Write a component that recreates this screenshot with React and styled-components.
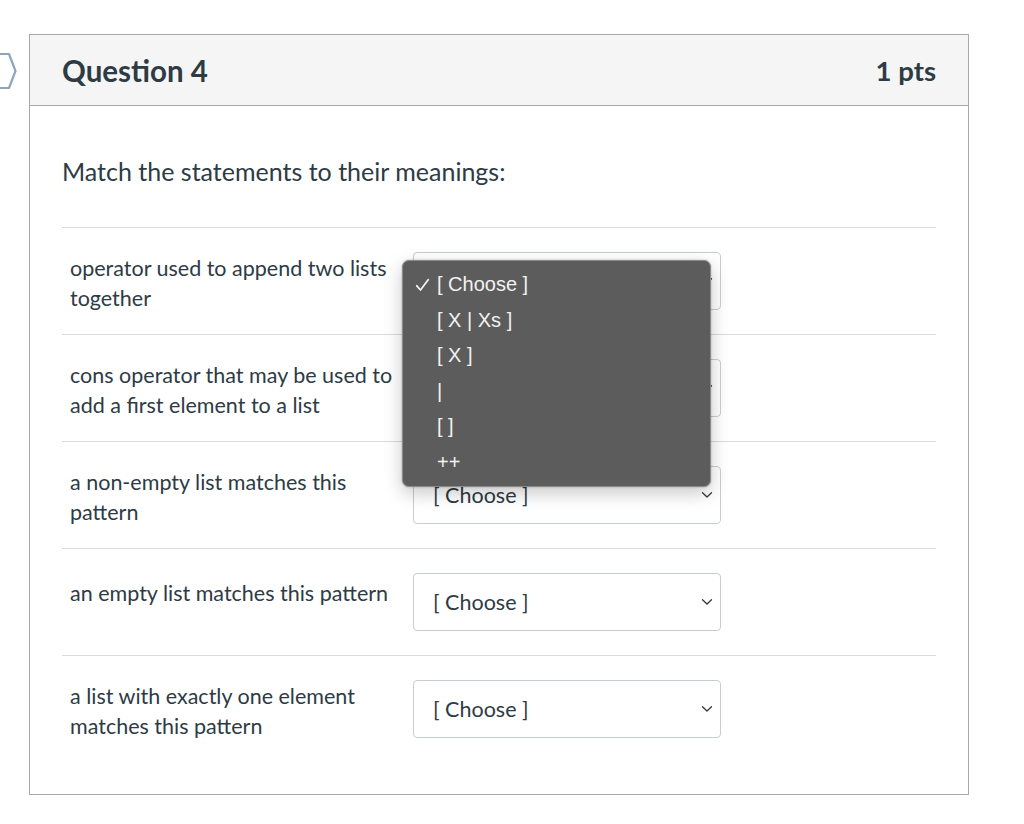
import React from "react";
import styled, { createGlobalStyle } from "styled-components";

const Global = createGlobalStyle`
  html, body { margin: 0; padding: 0; background: #ffffff; }
  body { font-family: Lato, "Open Sans", sans-serif; color: #2d3b45; }
  * { box-sizing: border-box; }
`;

const Page = styled.div`
  display: flex;
  align-items: flex-start;
  padding-top: 34px;
  width: 1024px;
  height: 824px;
  overflow: hidden;
`;

const MarkerCol = styled.div`
  width: 29px;
  flex: none;
  padding-top: 17px;
  display: flex;
`;

const Card = styled.section`
  width: 940px;
  border: 1px solid #a8a8a8;
  background: #fff;
`;

const Header = styled.header`
  height: 71px;
  background: #f5f5f5;
  border-bottom: 1px solid #a8a8a8;
  display: flex;
  align-items: center;
  justify-content: space-between;
  padding: 0 32px;
`;

const Title = styled.h2`
  margin: 0;
  font-size: 29.5px;
  font-weight: 700;
  color: #2d3b45;
`;

const Points = styled.div`
  font-size: 27.5px;
  font-weight: 700;
  color: #2d3b45;
`;

const Body = styled.div`
  padding: 50px 32px 32px;
`;

const Prompt = styled.p`
  margin: 0 0 40px;
  font-size: 25px;
  line-height: 31px;
`;

const Rows = styled.div`
  display: flex;
  flex-direction: column;
`;

const Row = styled.div`
  display: grid;
  grid-template-columns: 351px 308px;
  grid-template-rows: 58px;
  align-items: start;
  border-top: 1px solid #d9dcde;
  padding: 24px 0;
`;

const Label = styled.div`
  padding: ${(p) => (p.$single ? "5px" : "1px")} 16px 0 8px;
  font-size: 21.5px;
  line-height: 30px;
`;

const SelectWrap = styled.div`
  position: relative;
`;

const SelectBox = styled.div`
  height: 58px;
  border: 1px solid #c7cdd1;
  border-radius: 4px;
  background: #fff;
  display: flex;
  align-items: center;
  justify-content: space-between;
  padding: 0 7px 0 19px;
  font-size: 21.5px;
  color: #2d3b45;
`;

const Popup = styled.ul`
  position: absolute;
  left: -11px;
  top: 8px;
  width: 309px;
  margin: 0;
  padding: 6px 0;
  list-style: none;
  background: #5c5c5c;
  border: 1px solid #8c8c8c;
  border-radius: 7px;
  box-shadow: 0 6px 18px rgba(0, 0, 0, 0.22), 0 0 2px rgba(0, 0, 0, 0.3);
  z-index: 2;
`;

const Option = styled.li`
  height: 35.5px;
  display: flex;
  align-items: center;
  font-family: "Liberation Sans", Arial, sans-serif;
  font-size: 20px;
  color: #f2f2f2;
  padding-left: 34px;
  position: relative;
`;

const Check = styled.span`
  position: absolute;
  left: 12px;
  top: 50%;
  transform: translateY(-50%);
  display: flex;
`;

const CheckIcon = () => (
  <svg width="15" height="14" viewBox="0 0 15 14" aria-hidden="true">
    <path d="M1.8 7.8 L5.5 12 L13.2 1.8" fill="none" stroke="#f2f2f2" strokeWidth="1.8" strokeLinecap="round" strokeLinejoin="round" />
  </svg>
);

const Chevron = () => (
  <svg width="12" height="8" viewBox="0 0 12 8" aria-hidden="true">
    <path d="M1.5 1.8 L6 6 L10.5 1.8" fill="none" stroke="#2d3b45" strokeWidth="1.3" strokeLinecap="round" strokeLinejoin="round" />
  </svg>
);

const Marker = () => (
  <svg width="18" height="40" viewBox="0 0 18 40" aria-hidden="true">
    <path d="M-10 3 L9 3 L15.5 20 L9 37 L-10 37" fill="none" stroke="#8ea6bd" strokeWidth="2.2" strokeLinejoin="round" />
  </svg>
);

const rows = [
  { text: "operator used to append two lists together", single: false },
  { text: "cons operator that may be used to add a first element to a list", single: false },
  { text: "a non-empty list matches this pattern", single: false },
  { text: "an empty list matches this pattern", single: true },
  { text: "a list with exactly one element matches this pattern", single: false },
];

const options = ["[ Choose ]", "[ X | Xs ]", "[ X ]", "|", "[ ]", "++"];

export default function App() {
  return (
    <>
      <Global />
      <Page>
        <MarkerCol>
          <Marker />
        </MarkerCol>
        <Card>
          <Header>
            <Title>Question 4</Title>
            <Points>1 pts</Points>
          </Header>
          <Body>
            <Prompt>Match the statements to their meanings:</Prompt>
            <Rows>
              {rows.map((r, i) => (
                <Row key={i}>
                  <Label $single={r.single}>{r.text}</Label>
                  <SelectWrap>
                    <SelectBox>
                      <span>[ Choose ]</span>
                      <Chevron />
                    </SelectBox>
                    {i === 0 && (
                      <Popup>
                        {options.map((o, j) => (
                          <Option key={j}>
                            {j === 0 && (
                              <Check>
                                <CheckIcon />
                              </Check>
                            )}
                            {o}
                          </Option>
                        ))}
                      </Popup>
                    )}
                  </SelectWrap>
                </Row>
              ))}
            </Rows>
          </Body>
        </Card>
      </Page>
    </>
  );
}
